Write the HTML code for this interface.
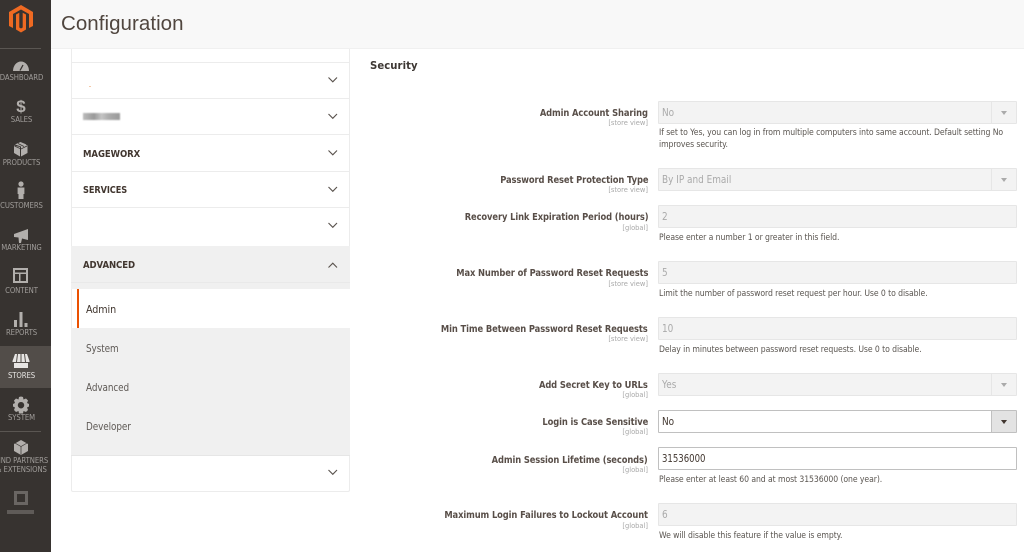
<!DOCTYPE html>
<html><head><meta charset="utf-8"><style>
html,body{margin:0;padding:0;background:#fff}
#p{position:relative;width:1024px;height:552px;overflow:hidden;font-family:"DejaVu Sans","Liberation Sans",sans-serif;background:#fff;filter:blur(.3px)}
#p div{position:absolute;box-sizing:border-box;white-space:nowrap}
.n{left:-24.5px;width:91px;text-align:center;font-size:7.7px;letter-spacing:-.1px;color:#a09d9a;line-height:10px;transform:scaleX(.9)}
.l{margin-top:1px;right:376px;font-size:9.9px;font-weight:bold;color:#41362f;line-height:13px;letter-spacing:-.12px;text-align:right;opacity:.88;transform:scaleX(.845);transform-origin:100% 50%}
.s{margin-top:1px;right:376px;font-size:6.7px;color:#a8a8a8;line-height:9px;text-align:right}
.f{left:658px;width:359px;height:23px;border:1px solid #e6e6e6;border-radius:1px;background:#f3f3f3;color:#aaa;font-size:10.3px;line-height:23px;padding-left:3px}
.f span{display:inline-block;transform:scaleX(.865);transform-origin:0 50%}
.f i{position:absolute;right:0;top:0;width:24px;height:21px;border-left:1px solid #e6e6e6}
.f i:after{content:"";position:absolute;left:9px;top:9px;border:3px solid transparent;border-top:4px solid #aaa;border-bottom:0}
.h{margin-top:1px;left:659px;font-size:8.55px;color:#5a5550;line-height:13px;letter-spacing:-.09px;transform:scaleX(.905);transform-origin:0 50%}
.b{font-size:9.9px;font-weight:bold;color:#41362f;left:83px;line-height:13px;letter-spacing:-.1px;transform:scaleX(.865);transform-origin:0 50%}
.m{margin-top:2px;font-size:10.2px;color:#5f5a56;left:86px;line-height:14px;letter-spacing:-.1px;transform:scaleX(.87);transform-origin:0 50%}
.r{left:71px;width:279px;height:1px;background:#ececec}
</style></head><body><div id="p">
<div style="left:51px;top:0;width:973px;height:49px;background:#f8f8f8;border-bottom:1px solid #f0f0f0"></div>
<div style="left:61px;top:10px;font-family:'Liberation Sans',sans-serif;font-size:20.5px;line-height:28px;color:#50463f;letter-spacing:.05px">Configuration</div>
<div style="left:0;top:0;width:51px;height:552px;background:#373330"></div>
<div style="left:0;top:346px;width:51px;height:42px;background:#524d49"></div>
<div style="left:0;top:48px;width:41px;height:1px;background:#5a5652"></div>
<div style="left:0;top:431px;width:41px;height:1px;background:#5a5652"></div>
<svg style="position:absolute;left:0;top:0" width="51" height="552" viewBox="0 0 51 552">
<path d="M21 5 L33 12 V26 L29 28 V14 L21 9.5 L13 14 V28 L9 26 V12Z" fill="#ef6a22"/>
<path d="M21 32.5 L16 29.5 V14.5 L19.3 12.8 V27.5 L21 28.5 L22.7 27.5 V12.8 L26 14.5 V29.5Z" fill="#ef6a22"/>
<g fill="#b2afac">
<path d="M13 71 A8 9.5 0 0 1 29 71 Z"/>
<path d="M20.5 142.5 L27.5 145.5 V153 L21 156.5 V147Z M20 147 V156.5 L14 153 V145.5Z M15 144.5 L20.5 142 L26.5 144.5 L21 146.5Z"/>
<circle cx="21" cy="184" r="2.6"/><path d="M17.6 187.5 H24.4 V194 H23.5 V199 H18.5 V194 H17.6Z"/>
<path d="M14 234 L28 229 V240 L22 238.5 L21 243 H19 L18.5 237.5 L14 237Z"/>
<path fill-rule="evenodd" d="M13 268 H28 V283 H13Z M15 270 V272.5 H26 V270Z M15 274 V281 H19 V274Z M20.5 274 V281 H26 V274Z"/>
<path d="M14 320 H17 V327 H14Z M19.5 312 H22.5 V327 H19.5Z M24.5 323 H27.5 V327 H24.5Z"/>
</g>
<text x="21" y="112" text-anchor="middle" font-family="Liberation Sans" font-weight="bold" font-size="17" fill="#b2afac">$</text>
<g fill="#e8e6e4">
<path d="M15 354 H27 L29.5 361 V362 H12.5 V361Z"/><path d="M14 363 H28 V368 H14Z"/>
</g>
<g stroke="#524d49" stroke-width="1"><path d="M17.5 354 L16.5 362 M21 354 V362 M24.5 354 L25.5 362"/></g>
<g fill="#b2afac">
<path fill-rule="evenodd" d="M21 396.5 L23 397 L23.5 399.5 L26 398.5 L28 400.5 L27 403 L29 404 V406.5 L27 407.5 L28 410 L26 412 L23.5 411 L23 413.5 H19 L18.5 411 L16 412 L14 410 L15 407.5 L13 406.5 V404 L15 403 L14 400.5 L16 398.5 L18.5 399.5 L19 397Z M21 402 A3.2 3.2 0 1 0 21.01 402Z"/>
<path d="M21 440 L28 444 V451 L21 455 L14 451 V444Z"/>
<path fill-rule="evenodd" d="M14 491 H28 V505 H14Z M17 494 V502 H25 V494Z" fill="#6a6663"/>
</g>
<path d="M7 510 H34 V514 H7Z" fill="#5f5b58"/>
<path d="M20 70.5 L23 65" stroke="#373330" stroke-width="1.3"/>
<path d="M14 442.5 L21 446.5 L28 442.5 M21 446.5 V454.5" stroke="#373330" stroke-width=".7" fill="none"/>
<path d="M14.5 146 L21 149 L27 146 M18 143.5 L24 146.5" stroke="#373330" stroke-width=".7" fill="none"/>
</svg>
<div class="n" style="top:73px">DASHBOARD</div>
<div class="n" style="top:115px">SALES</div>
<div class="n" style="top:158px">PRODUCTS</div>
<div class="n" style="top:201px">CUSTOMERS</div>
<div class="n" style="top:243px">MARKETING</div>
<div class="n" style="top:286px">CONTENT</div>
<div class="n" style="top:328px">REPORTS</div>
<div class="n" style="top:371px;color:#e8e6e4">STORES</div>
<div class="n" style="top:413px">SYSTEM</div>
<div class="n" style="top:456px">FIND PARTNERS</div>
<div class="n" style="top:465px">&amp; EXTENSIONS</div>

<div style="left:71px;top:49px;width:279px;height:443px;border:1px solid #ececec;border-top:0;border-radius:0 0 2px 2px"></div>
<div class="r" style="top:62px"></div><div class="r" style="top:98px"></div><div class="r" style="top:134px"></div>
<div class="r" style="top:171px"></div><div class="r" style="top:207px"></div>
<div style="left:71px;top:246px;width:279px;height:37px;background:#f0f0f0;border-bottom:1px solid #e9e9e9"></div>
<div style="left:71px;top:283px;width:279px;height:6px;background:#f0f0f0"></div>
<div style="left:77px;top:289px;width:273px;height:40px;background:#fff"></div>
<div style="left:77px;top:289px;width:2px;height:40px;background:#eb5202"></div>
<div style="left:71px;top:328px;width:279px;height:128px;background:#f0f0f0;border-bottom:1px solid #e6e6e6"></div>
<div style="left:89px;top:86px;width:2px;height:1px;background:#f4c9a8"></div>
<div style="left:83px;top:113px;width:37px;height:7px;background:linear-gradient(90deg,#bbb,#999 30%,#c4c4c4 50%,#aaa 70%,#999);filter:blur(.7px)"></div>
<div class="b" style="top:148px">MAGEWORX</div>
<div class="b" style="top:184px;transform:scaleX(.83)">SERVICES</div>
<div class="b" style="top:259px">ADVANCED</div>
<svg style="position:absolute;left:326px;top:70px" width="14" height="412" viewBox="0 0 14 412" fill="none" stroke="#5a534e" stroke-width="1.1">
<path d="M2.5 7.5 L6.8 11.8 L11 7.5M2.5 44 L6.8 48.3 L11 44M2.5 80.5 L6.8 84.8 L11 80.5M2.5 117 L6.8 121.3 L11 117M2.5 153 L6.8 157.3 L11 153M2.5 197.5 L6.8 193.2 L11 197.5M2.5 400 L6.8 404.3 L11 400"/>
</svg>
<div class="m" style="color:#41362f;transform:scaleX(.94);top:302px">Admin</div>
<div class="m" style="top:341px">System</div>
<div class="m" style="top:380px">Advanced</div>
<div class="m" style="top:419px">Developer</div>

<div style="left:370px;top:59px;font-size:11px;font-weight:bold;color:#3d3733;line-height:14px;letter-spacing:.05px;transform:scaleX(.92);transform-origin:0 50%">Security</div>

<div class="l" style="top:106px">Admin Account Sharing</div><div class="s" style="top:118px">[store view]</div>
<div class="f" style="top:101px"><span>No</span><i></i></div>
<div class="h" style="top:126px">If set to Yes, you can log in from multiple computers into same account. Default setting No</div>
<div class="h" style="top:138px">improves security.</div>

<div class="l" style="top:173px">Password Reset Protection Type</div><div class="s" style="top:185px">[store view]</div>
<div class="f" style="top:168px"><span>By IP and Email</span><i></i></div>

<div class="l" style="top:210px">Recovery Link Expiration Period (hours)</div><div class="s" style="top:223px">[global]</div>
<div class="f" style="top:205px"><span>2</span></div>
<div class="h" style="top:231px">Please enter a number 1 or greater in this field.</div>

<div class="l" style="top:266px">Max Number of Password Reset Requests</div><div class="s" style="top:279px">[store view]</div>
<div class="f" style="top:261px"><span>5</span></div>
<div class="h" style="top:287px">Limit the number of password reset request per hour. Use 0 to disable.</div>

<div class="l" style="top:322px">Min Time Between Password Reset Requests</div><div class="s" style="top:334px">[store view]</div>
<div class="f" style="top:317px"><span>10</span></div>
<div class="h" style="top:343px">Delay in minutes between password reset requests. Use 0 to disable.</div>

<div class="l" style="top:378px">Add Secret Key to URLs</div><div class="s" style="top:390px">[global]</div>
<div class="f" style="top:373px"><span>Yes</span><i></i></div>

<div class="l" style="top:415px">Login is Case Sensitive</div><div class="s" style="top:427px">[global]</div>
<div class="f" style="top:410px;background:#fff;border-color:#c0c0c0;color:#41362f"><span>No</span><i style="background:#e3e3e3;border-left-color:#c0c0c0"><b style="position:absolute;left:9px;top:9px;width:0;height:0;border:3px solid transparent;border-top:4px solid #41362f;border-bottom:0;z-index:2"></b></i></div>

<div class="l" style="top:453px">Admin Session Lifetime (seconds)</div><div class="s" style="top:465px">[global]</div>
<div class="f" style="top:447px;background:#fff;border-color:#c0c0c0;color:#41362f"><span style="transform:scaleX(.83)">31536000</span></div>
<div class="h" style="top:473px">Please enter at least 60 and at most 31536000 (one year).</div>

<div class="l" style="top:508px">Maximum Login Failures to Lockout Account</div><div class="s" style="top:521px">[global]</div>
<div class="f" style="top:503px"><span>6</span></div>
<div class="h" style="top:529px">We will disable this feature if the value is empty.</div>
</div></body></html>
